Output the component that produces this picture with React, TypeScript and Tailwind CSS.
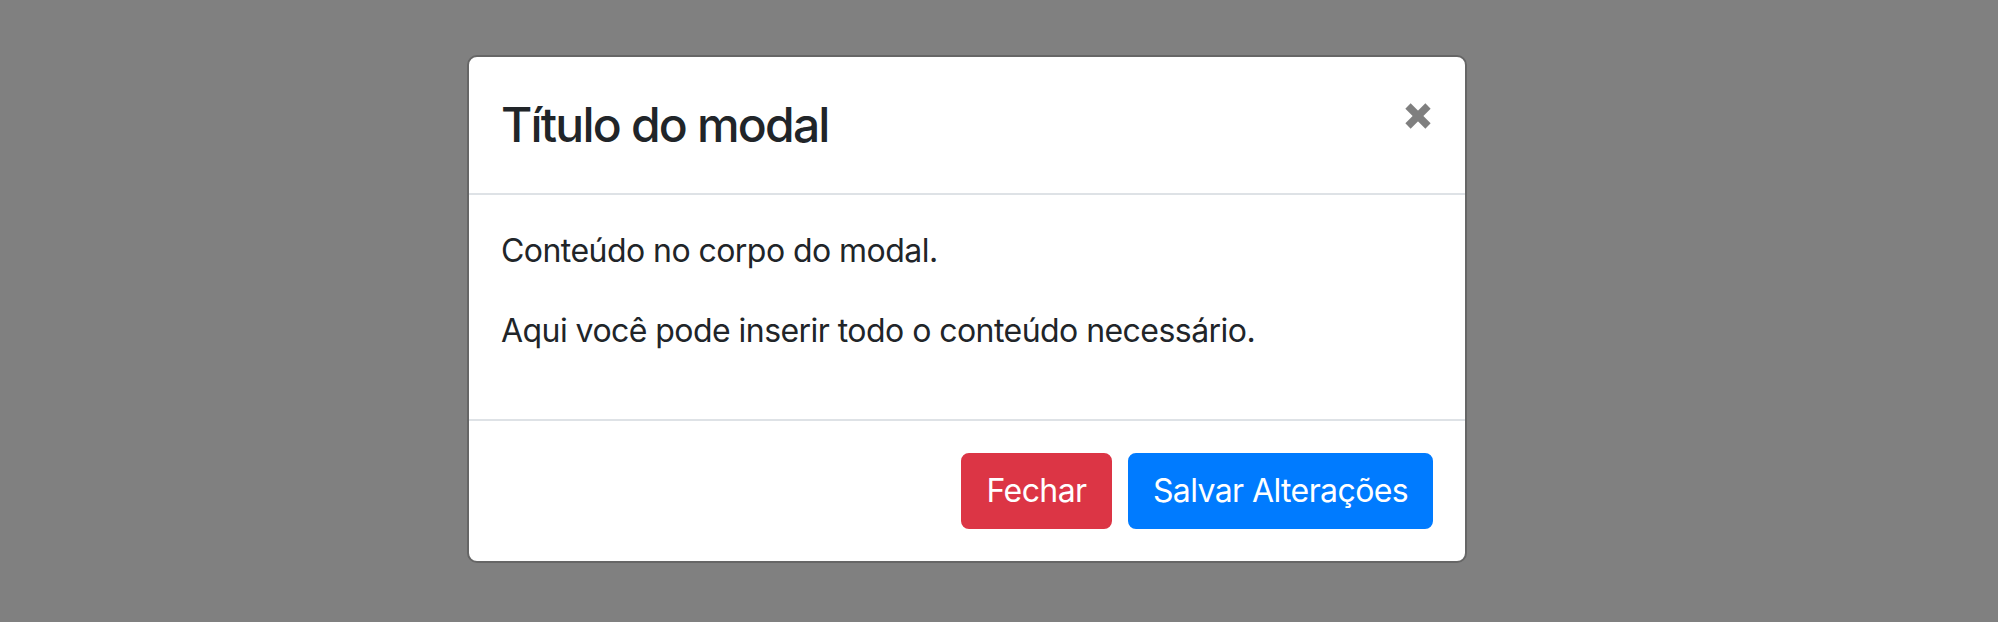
export default function App() {
  return (
    <div
      className="w-full h-[622px] bg-[#808080] pt-[55px] pl-[467px] overflow-hidden"
      style={{ fontFamily: "Inter, 'Noto Sans', sans-serif" }}
    >
      <div className="w-[1000px] bg-white border-2 border-[#666666] rounded-[10px] text-[#212529]">
        {/* Header */}
        <div className="flex justify-between items-start p-[32px] border-b-2 border-[#dee2e6]">
          <h4 className="text-[48px] leading-[72px] font-medium tracking-[-1.8px]">Título do modal</h4>
          <button className="mt-[14px] mr-[2px]" aria-label="Fechar">
            <svg width="26" height="26" viewBox="0 0 26 26">
              <line x1="3" y1="3" x2="23" y2="23" stroke="#7f7f7f" strokeWidth="7.5" />
              <line x1="23" y1="3" x2="3" y2="23" stroke="#7f7f7f" strokeWidth="7.5" />
            </svg>
          </button>
        </div>

        {/* Body */}
        <div className="p-[32px] text-[32px] leading-[48px] tracking-[-0.55px]">
          <p className="mb-[32px]">Conteúdo no corpo do modal.</p>
          <p className="mb-[32px]">Aqui você pode inserir todo o conteúdo necessário.</p>
        </div>

        {/* Footer */}
        <div className="flex justify-end items-center gap-[16px] px-[32px] py-[32px] border-t-2 border-[#dee2e6]">
          <button className="w-[151px] py-[12px] rounded-[8px] bg-[#dc3545] text-white text-[32px] leading-[48px] tracking-[-0.6px] border-2 border-[#dc3545]">
            Fechar
          </button>
          <button className="w-[305px] py-[12px] rounded-[8px] bg-[#007bff] text-white text-[32px] leading-[48px] tracking-[-0.6px] border-2 border-[#007bff]">
            Salvar Alterações
          </button>
        </div>
      </div>
    </div>
  );
}
